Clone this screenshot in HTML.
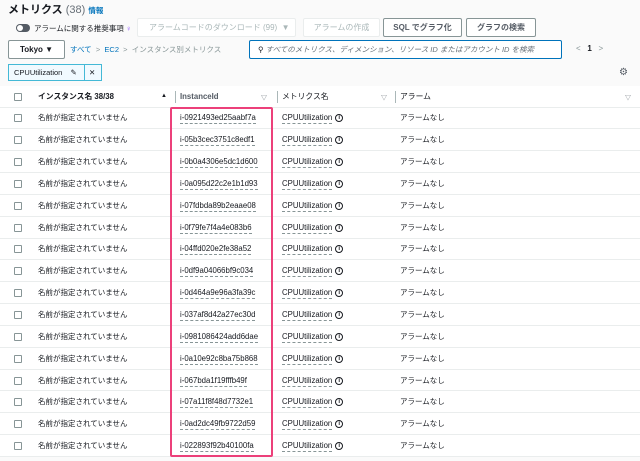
<!DOCTYPE html><html><head><meta charset="utf-8"><style>
*{box-sizing:border-box;margin:0;padding:0}
body{width:640px;height:461px;overflow:hidden;background:#fafafa;font-family:"Liberation Sans","Noto Sans CJK JP",sans-serif;font-size:8px;color:#16191f;position:relative}
.a{position:absolute;white-space:nowrap}
.btn{position:absolute;border:1px solid #879596;border-radius:2px;background:#fff;font-weight:bold;font-size:8px;text-align:center;line-height:17px;height:19px;color:#545b64}
.dis{color:#aab7b8;border-color:#eaeded;font-weight:normal}
table{position:absolute;left:0;top:86px;width:640px;border-collapse:collapse;background:#fff}
td{height:21.85px;border-bottom:1px solid #eaeded;font-size:7.5px;white-space:nowrap;padding:0}
th{height:21px;text-align:left;font-size:7.8px;border-bottom:1px solid #eaeded;padding:0;position:relative}
.cb{display:inline-block;width:8px;height:8px;border:1px solid #879596;border-radius:1px;margin-left:14px;vertical-align:middle}
.id{border-bottom:1px dashed #879596;padding-bottom:1px;font-size:7.8px}
.i{display:inline-block;width:8px;height:8px;border:1px solid #16191f;border-radius:50%;vertical-align:middle;margin-left:3px;font-size:6px;line-height:6px;text-align:center;font-weight:bold}
.sep{position:absolute;left:0;top:5px;width:1px;height:12px;background:#aab7b8}
.tri{position:absolute;top:7px;font-size:6px;color:#687078}
</style></head><body>
<div class="a" style="left:8px;top:1px;font-size:11px;font-weight:bold">メトリクス <span style="font-weight:normal;color:#687078">(38)</span> <span style="font-size:7.5px;color:#0073bb">情報</span></div>
<div class="a" style="left:16px;top:24px;width:14px;height:8px;border-radius:4px;background:#545b64"><div style="position:absolute;left:1px;top:1px;width:6px;height:6px;border-radius:50%;background:#fff"></div></div>
<div class="a" style="left:34px;top:23px;font-size:7.5px">アラームに関する推奨事項 <span style="color:#8c4fff">♀</span></div>
<div class="btn dis" style="left:137px;top:18px;width:159px;text-align:left;padding-left:11px">アラームコードのダウンロード (99) &nbsp;▼</div>
<div class="btn dis" style="left:303px;top:18px;width:77px">アラームの作成</div>
<div class="btn" style="left:383px;top:18px;width:79px">SQL でグラフ化</div>
<div class="btn" style="left:466px;top:18px;width:70px">グラフの検索</div>
<div class="btn" style="left:8px;top:40px;width:57px;height:19px;color:#16191f">Tokyo ▼</div>
<div class="a" style="left:70px;top:44px;font-size:7.5px;color:#0073bb">すべて <span style="color:#879596">&nbsp;&gt;&nbsp;</span> EC2 <span style="color:#879596">&nbsp;&gt;&nbsp; インスタンス別メトリクス</span></div>
<div class="a" style="left:249px;top:40px;width:313px;height:19px;border:1px solid #0073bb;border-radius:2px;background:#fff;font-size:7.5px;color:#687078;line-height:17px;padding-left:8px"><span style="color:#16191f">⚲</span> <i>すべてのメトリクス、ディメンション、リソース ID またはアカウント ID を検索</i></div>
<div class="a" style="left:576px;top:44px;font-size:8px;color:#879596">&lt; &nbsp;&nbsp;<b style="color:#16191f">1</b>&nbsp;&nbsp; &gt;</div>
<div class="a" style="left:8px;top:64px;width:94px;height:17px;border:1px solid #44b9d6;background:#f1faff;font-size:7.5px;line-height:15px;padding-left:5px">CPUUtilization <span style="margin-left:6px">✎</span><span style="position:absolute;left:75px;top:0;width:1px;height:15px;background:#44b9d6"></span><span style="position:absolute;left:80px">✕</span></div>
<div class="a" style="left:619px;top:67px;font-size:10px;color:#545b64">⚙</div>
<table>
<tr><th style="width:28px"><span class="cb"></span></th><th style="width:147px;padding-left:10px;font-weight:bold">インスタンス名 38/38<span class="tri" style="left:133px;color:#16191f">▲</span></th><th style="width:102px;padding-left:5px;font-weight:bold;color:#545b64"><span class="sep"></span>InstanceId<span class="tri" style="left:86px">▽</span></th><th style="width:118px;padding-left:5px;font-weight:normal"><span class="sep"></span>メトリクス名<span class="tri" style="left:104px">▽</span></th><th style="padding-left:5px;font-weight:normal"><span class="sep"></span>アラーム<span class="tri" style="left:230px">▽</span></th></tr>
<tr><td><span class="cb"></span></td><td style="padding-left:10px">名前が指定されていません</td><td style="padding-left:5px"><span class="id">i-0921493ed25aabf7a</span></td><td style="padding-left:5px"><span class="id">CPUUtilization</span><span class="i">i</span></td><td style="padding-left:5px">アラームなし</td></tr>
<tr><td><span class="cb"></span></td><td style="padding-left:10px">名前が指定されていません</td><td style="padding-left:5px"><span class="id">i-05b3cec3751c8edf1</span></td><td style="padding-left:5px"><span class="id">CPUUtilization</span><span class="i">i</span></td><td style="padding-left:5px">アラームなし</td></tr>
<tr><td><span class="cb"></span></td><td style="padding-left:10px">名前が指定されていません</td><td style="padding-left:5px"><span class="id">i-0b0a4306e5dc1d600</span></td><td style="padding-left:5px"><span class="id">CPUUtilization</span><span class="i">i</span></td><td style="padding-left:5px">アラームなし</td></tr>
<tr><td><span class="cb"></span></td><td style="padding-left:10px">名前が指定されていません</td><td style="padding-left:5px"><span class="id">i-0a095d22c2e1b1d93</span></td><td style="padding-left:5px"><span class="id">CPUUtilization</span><span class="i">i</span></td><td style="padding-left:5px">アラームなし</td></tr>
<tr><td><span class="cb"></span></td><td style="padding-left:10px">名前が指定されていません</td><td style="padding-left:5px"><span class="id">i-07fdbda89b2eaae08</span></td><td style="padding-left:5px"><span class="id">CPUUtilization</span><span class="i">i</span></td><td style="padding-left:5px">アラームなし</td></tr>
<tr><td><span class="cb"></span></td><td style="padding-left:10px">名前が指定されていません</td><td style="padding-left:5px"><span class="id">i-0f79fe7f4a4e083b6</span></td><td style="padding-left:5px"><span class="id">CPUUtilization</span><span class="i">i</span></td><td style="padding-left:5px">アラームなし</td></tr>
<tr><td><span class="cb"></span></td><td style="padding-left:10px">名前が指定されていません</td><td style="padding-left:5px"><span class="id">i-04ffd020e2fe38a52</span></td><td style="padding-left:5px"><span class="id">CPUUtilization</span><span class="i">i</span></td><td style="padding-left:5px">アラームなし</td></tr>
<tr><td><span class="cb"></span></td><td style="padding-left:10px">名前が指定されていません</td><td style="padding-left:5px"><span class="id">i-0df9a04066bf9c034</span></td><td style="padding-left:5px"><span class="id">CPUUtilization</span><span class="i">i</span></td><td style="padding-left:5px">アラームなし</td></tr>
<tr><td><span class="cb"></span></td><td style="padding-left:10px">名前が指定されていません</td><td style="padding-left:5px"><span class="id">i-0d464a9e96a3fa39c</span></td><td style="padding-left:5px"><span class="id">CPUUtilization</span><span class="i">i</span></td><td style="padding-left:5px">アラームなし</td></tr>
<tr><td><span class="cb"></span></td><td style="padding-left:10px">名前が指定されていません</td><td style="padding-left:5px"><span class="id">i-037af8d42a27ec30d</span></td><td style="padding-left:5px"><span class="id">CPUUtilization</span><span class="i">i</span></td><td style="padding-left:5px">アラームなし</td></tr>
<tr><td><span class="cb"></span></td><td style="padding-left:10px">名前が指定されていません</td><td style="padding-left:5px"><span class="id">i-0981086424add6dae</span></td><td style="padding-left:5px"><span class="id">CPUUtilization</span><span class="i">i</span></td><td style="padding-left:5px">アラームなし</td></tr>
<tr><td><span class="cb"></span></td><td style="padding-left:10px">名前が指定されていません</td><td style="padding-left:5px"><span class="id">i-0a10e92c8ba75b868</span></td><td style="padding-left:5px"><span class="id">CPUUtilization</span><span class="i">i</span></td><td style="padding-left:5px">アラームなし</td></tr>
<tr><td><span class="cb"></span></td><td style="padding-left:10px">名前が指定されていません</td><td style="padding-left:5px"><span class="id">i-067bda1f19fffb49f</span></td><td style="padding-left:5px"><span class="id">CPUUtilization</span><span class="i">i</span></td><td style="padding-left:5px">アラームなし</td></tr>
<tr><td><span class="cb"></span></td><td style="padding-left:10px">名前が指定されていません</td><td style="padding-left:5px"><span class="id">i-07a11f8f48d7732e1</span></td><td style="padding-left:5px"><span class="id">CPUUtilization</span><span class="i">i</span></td><td style="padding-left:5px">アラームなし</td></tr>
<tr><td><span class="cb"></span></td><td style="padding-left:10px">名前が指定されていません</td><td style="padding-left:5px"><span class="id">i-0ad2dc49fb9722d59</span></td><td style="padding-left:5px"><span class="id">CPUUtilization</span><span class="i">i</span></td><td style="padding-left:5px">アラームなし</td></tr>
<tr><td><span class="cb"></span></td><td style="padding-left:10px">名前が指定されていません</td><td style="padding-left:5px"><span class="id">i-022893f92b40100fa</span></td><td style="padding-left:5px"><span class="id">CPUUtilization</span><span class="i">i</span></td><td style="padding-left:5px">アラームなし</td></tr>
</table>
<div class="a" style="left:170px;top:107px;width:103px;height:350px;border:2px solid #ec407a;border-radius:2px"></div>
</body></html>
